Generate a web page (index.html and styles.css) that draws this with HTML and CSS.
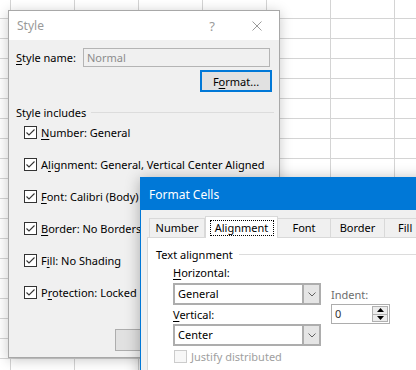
FILE: index.html
```html
<!DOCTYPE html>
<html lang="en">
<head>
<meta charset="UTF-8">
<meta name="viewport" content="width=device-width, initial-scale=1.0">
<title>Style</title>
<link rel="stylesheet" href="styles.css">
</head>
<body>
<div class="desktop">

  <div class="dialog style-dialog">
    <div class="titlebar">
      <span class="title">Style</span>
      <span class="title-btn help">?</span>
      <span class="title-btn close">
        <svg width="10" height="10" viewBox="0 0 10 10"><path d="M0.5 0.5 L9.5 9.5 M9.5 0.5 L0.5 9.5" stroke="#9a9a9a" stroke-width="1" fill="none"/></svg>
      </span>
    </div>
    <div class="dialog-body">
      <div class="name-row">
        <label class="name-label"><u>S</u>tyle name:</label>
        <div class="textbox">Normal</div>
      </div>
      <div class="format-row">
        <button class="btn btn-default">F<u>o</u>rmat...</button>
      </div>
      <div class="group-label"><span>Style includes</span><span class="rule"></span></div>
      <ul class="includes">
        <li><span class="check"><svg width="11" height="11" viewBox="0 0 11 11"><path d="M1.5 5.5 L4 8 L9.5 2.5" stroke="#333" stroke-width="1.1" fill="none"/></svg></span><span><u>N</u>umber: General</span></li>
        <li><span class="check"><svg width="11" height="11" viewBox="0 0 11 11"><path d="M1.5 5.5 L4 8 L9.5 2.5" stroke="#333" stroke-width="1.1" fill="none"/></svg></span><span>A<u>l</u>ignment: General, Vertical Center Aligned</span></li>
        <li><span class="check"><svg width="11" height="11" viewBox="0 0 11 11"><path d="M1.5 5.5 L4 8 L9.5 2.5" stroke="#333" stroke-width="1.1" fill="none"/></svg></span><span><u>F</u>ont: Calibri (Body) 11</span></li>
        <li><span class="check"><svg width="11" height="11" viewBox="0 0 11 11"><path d="M1.5 5.5 L4 8 L9.5 2.5" stroke="#333" stroke-width="1.1" fill="none"/></svg></span><span><u>B</u>order: No Borders</span></li>
        <li><span class="check"><svg width="11" height="11" viewBox="0 0 11 11"><path d="M1.5 5.5 L4 8 L9.5 2.5" stroke="#333" stroke-width="1.1" fill="none"/></svg></span><span>F<u>i</u>ll: No Shading</span></li>
        <li><span class="check"><svg width="11" height="11" viewBox="0 0 11 11"><path d="M1.5 5.5 L4 8 L9.5 2.5" stroke="#333" stroke-width="1.1" fill="none"/></svg></span><span>P<u>r</u>otection: Locked</span></li>
      </ul>
      <div class="buttons">
        <button class="btn">OK</button>
        <button class="btn">Cancel</button>
      </div>
    </div>
  </div>

  <div class="dialog cells-dialog">
    <div class="titlebar">
      <span class="title">Format Cells</span>
    </div>
    <div class="dialog-body">
      <div class="tabs">
        <div class="tab tab-number">Number</div>
        <div class="tab tab-active"><span class="focus">Alignment</span></div>
        <div class="tab tab-font">Font</div>
        <div class="tab tab-border">Border</div>
        <div class="tab tab-fill">Fill</div>
      </div>
      <div class="panel">
        <div class="group-label"><span>Text alignment</span><span class="rule"></span></div>
        <div class="align-grid">
          <div class="align-col">
            <div class="field-label"><u>H</u>orizontal:</div>
            <div class="select">
              <span class="select-text">General</span>
              <span class="select-btn"><svg width="8" height="5" viewBox="0 0 8 5"><path d="M0.5 0.5 L4 4 L7.5 0.5" stroke="#606060" stroke-width="1" fill="none"/></svg></span>
            </div>
            <div class="field-label label-vertical"><u>V</u>ertical:</div>
            <div class="select select-vertical">
              <span class="select-text">Center</span>
              <span class="select-btn"><svg width="8" height="5" viewBox="0 0 8 5"><path d="M0.5 0.5 L4 4 L7.5 0.5" stroke="#606060" stroke-width="1" fill="none"/></svg></span>
            </div>
            <div class="justify-row"><span class="check disabled"></span><span>Justify distributed</span></div>
          </div>
          <div class="indent-col">
            <div class="field-label indent-label">Indent:</div>
            <div class="spin">
              <span class="spin-text">0</span>
              <span class="spin-btns">
                <span class="spin-btn"><svg width="7" height="4" viewBox="0 0 7 4"><path d="M0 4 L3.5 0 L7 4 Z" fill="#000"/></svg></span>
                <span class="spin-btn"><svg width="7" height="4" viewBox="0 0 7 4"><path d="M0 0 L7 0 L3.5 4 Z" fill="#000"/></svg></span>
              </span>
            </div>
          </div>
        </div>
      </div>
    </div>
  </div>

</div>
</body>
</html>
```

FILE: styles.css
```css
body {
  margin: 0;
  font-family: "Noto Sans", "Open Sans", sans-serif;
  font-size: 11px;
  color: #000;
}
.desktop {
  position: relative;
  width: 416px;
  height: 370px;
  overflow: hidden;
  background-color: #fff;
  background-image:
    linear-gradient(to right, #d4d4d4 1px, transparent 1px),
    linear-gradient(to bottom, #d4d4d4 1px, transparent 1px);
  background-size: 64px 20px;
  background-position: 10px 18px;
}
u {
  text-decoration-thickness: 1px;
  text-underline-offset: 2px;
}

/* windows */
.dialog {
  position: absolute;
  box-sizing: border-box;
  display: flex;
  flex-direction: column;
  background: #f0f0f0;
}
.style-dialog {
  left: 8px;
  top: 10px;
  width: 272px;
  height: 348px;
  border: 1px solid #a8a8a8;
  box-shadow: 0 2px 12px rgba(0, 0, 0, 0.22);
}
.cells-dialog {
  left: 140px;
  top: 177px;
  width: 300px;
  height: 230px;
  border: 1px solid #0078d7;
  box-shadow: 0 2px 14px rgba(0, 0, 0, 0.3);
}
.titlebar {
  display: flex;
  align-items: center;
  height: 29px;
  background: #fff;
  flex-shrink: 0;
  font-size: 12px;
}
.title {
  flex: 1;
  padding-left: 8px;
}
.style-dialog .title {
  color: #999;
}
.title-btn {
  display: flex;
  align-items: center;
  justify-content: center;
  height: 29px;
  width: 46px;
  color: #9a9a9a;
  font-size: 13px;
}
.title-btn.close {
  width: 44px;
}
.cells-dialog .titlebar {
  height: 32px;
  background: #0078d7;
  color: #fff;
}

/* style dialog body */
.dialog-body {
  flex: 1;
  padding: 8px 7px 0 7px;
}
.name-row {
  display: flex;
  align-items: center;
  height: 19px;
}
.name-label {
  width: 67px;
}
.textbox {
  box-sizing: border-box;
  width: 187px;
  height: 19px;
  border: 1px solid #b4b4b4;
  background: #f0f0f0;
  color: #8c8c8c;
  padding-left: 3px;
  line-height: 17px;
}
.format-row {
  display: flex;
  justify-content: flex-end;
  margin-top: 3px;
}
.btn {
  box-sizing: border-box;
  width: 75px;
  height: 22px;
  border: 1px solid #adadad;
  background: #e1e1e1;
  font: inherit;
  color: #000;
  padding: 0;
}
.btn-default {
  width: 72px;
  border: 2px solid #0078d7;
}
.group-label {
  display: flex;
  align-items: center;
  height: 16px;
  margin-top: 12px;
}
.group-label .rule {
  flex: 1;
  height: 1px;
  background: #dcdcdc;
  margin: 0 -2px 0 5px;
}
.includes {
  list-style: none;
  margin: 4px 0 0;
  padding: 0 0 0 8px;
  display: flex;
  flex-direction: column;
  gap: 16px;
}
.includes li {
  display: flex;
  align-items: center;
  height: 16px;
  white-space: nowrap;
}
.check {
  box-sizing: border-box;
  display: flex;
  align-items: center;
  justify-content: center;
  width: 13px;
  height: 13px;
  border: 1px solid #333;
  background: #fff;
  margin-right: 4px;
  flex-shrink: 0;
}
.check.disabled {
  border-color: #cccccc;
  background: #f7f7f7;
}
.buttons {
  display: flex;
  justify-content: flex-end;
  gap: 6px;
  margin: 29px 1px 0 0;
}

/* format cells */
.cells-dialog .dialog-body {
  display: flex;
  flex-direction: column;
  padding: 6px 0 0 6px;
}
.tabs {
  display: flex;
  align-items: flex-end;
  height: 21px;
  padding-left: 2px;
}
.tab {
  box-sizing: border-box;
  height: 19px;
  border: 1px solid #d9d9d9;
  border-bottom: none;
  background: #f0f0f0;
  text-align: center;
  line-height: 18px;
  white-space: nowrap;
}
.tab-number {
  width: 56px;
}
.tab-active {
  position: relative;
  z-index: 1;
  width: 73px;
  height: 22px;
  margin-bottom: -1px;
  padding-top: 3px;
  background: #fff;
}
.focus {
  display: block;
  box-sizing: border-box;
  width: 64px;
  height: 16px;
  margin: 0 auto;
  border: 1px dotted #000;
  line-height: 14px;
}
.tab-font {
  width: 54px;
  margin-left: -1px;
}
.tab-border {
  width: 55px;
  margin-left: -1px;
}
.tab-fill {
  width: 44px;
  margin-left: -1px;
  text-align: left;
  padding-left: 13px;
}
.panel {
  flex: 1;
  background: #fff;
  border: 1px solid #d9d9d9;
  padding: 8px 0 0 8px;
}
.panel .group-label {
  margin-top: 0;
}
.panel .group-label .rule {
  margin: 0 0 0 6px;
}
.align-grid {
  display: flex;
  align-items: flex-start;
  padding-left: 17px;
  margin-top: 3px;
}
.field-label {
  height: 16px;
  line-height: 16px;
}
.select {
  box-sizing: border-box;
  display: flex;
  width: 148px;
  height: 22px;
  margin-top: 2px;
  border: 2px solid #adadad;
  background: #fff;
}
.select-text {
  flex: 1;
  line-height: 18px;
  padding-left: 3px;
}
.select-btn {
  box-sizing: border-box;
  display: flex;
  align-items: center;
  justify-content: center;
  width: 17px;
  border-left: 2px solid #adadad;
  background: #e5e5e5;
}
.label-vertical {
  margin-top: 2px;
}
.select-vertical {
  margin-top: 1px;
}
.justify-row {
  display: flex;
  align-items: center;
  height: 16px;
  margin: 2px 0 0 1px;
  color: #a0a0a0;
}
.justify-row .check {
  margin-right: 4px;
}
.indent-col {
  margin: 22px 0 0 10px;
}
.indent-label {
  color: #6d6d6d;
}
.spin {
  box-sizing: border-box;
  display: flex;
  width: 59px;
  height: 20px;
  margin-top: 1px;
  border: 1px solid #adadad;
  background: #fff;
}
.spin-text {
  flex: 1;
  line-height: 18px;
  padding-left: 3px;
  color: #333;
}
.spin-btns {
  box-sizing: border-box;
  display: flex;
  flex-direction: column;
  width: 16px;
  margin: 1px 1px 1px 0;
  border: 1px solid #b0b0b0;
}
.spin-btn {
  flex: 1;
  display: flex;
  align-items: center;
  justify-content: center;
  background: #ececec;
}
.spin-btn + .spin-btn {
  border-top: 1px solid #b0b0b0;
}
```
